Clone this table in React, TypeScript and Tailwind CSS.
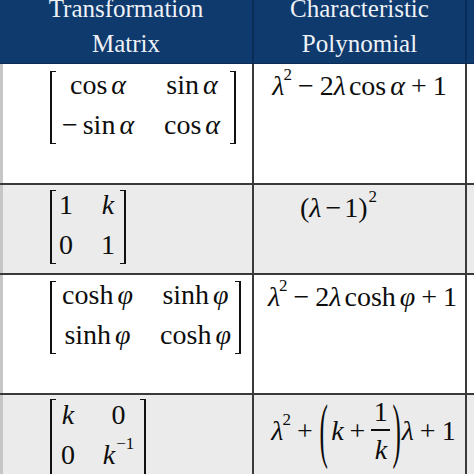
import React from "react";

const serif = "font-['Liberation_Serif','Times_New_Roman',serif]";

function LeftBracket({ className = "" }: { className?: string }) {
  return <div className={`w-[6px] border-y-[1.5px] border-l-2 border-[#111] ${className}`} />;
}

function RightBracket({ className = "" }: { className?: string }) {
  return <div className={`w-[6px] border-y-[1.5px] border-r-2 border-[#111] ${className}`} />;
}

const V = ({ children, className = "" }: { children: React.ReactNode; className?: string }) => (
  <span className={`italic ${className}`}>{children}</span>
);

const Sq = ({ className = "" }: { className?: string }) => (
  <sup className={`text-[17px] -top-[15px] -ml-[1px] not-italic ${className}`}>2</sup>
);

const Op = ({ children }: { children: React.ReactNode }) => <span className="mx-[6px]">{children}</span>;

function Row({
  bg,
  height,
  left,
  right,
}: {
  bg: string;
  height: string;
  left: React.ReactNode;
  right: React.ReactNode;
}) {
  return (
    <div className={`flex ${height} ${bg} border-b-2 border-[#3a3a3a]`}>
      <div className="w-[254px] border-l-[3px] border-l-[#c6c6c6] border-r-2 border-r-[#3a3a3a] pl-[47px]">
        {left}
      </div>
      <div className="w-[213px] border-r-2 border-[#3a3a3a]">{right}</div>
      <div className="flex-1" />
    </div>
  );
}

export default function App() {
  return (
    <div className={`w-[474px] h-[474px] overflow-hidden bg-white ${serif} text-[#0d0d0d]`}>
      <div className="flex h-[64px] bg-[#0e3a6d] text-[25px] leading-[35px] text-[#eef2f7] border-b border-[#0a2c55]">
        <div className="w-[254px] border-r-2 border-[#0a2d57] flex flex-col justify-end items-center pb-[2px] overflow-hidden">
          <div>Transformation</div>
          <div>Matrix</div>
        </div>
        <div className="w-[213px] border-r-2 border-[#0a2d57] flex flex-col justify-end items-center pb-[2px] overflow-hidden">
          <div>Characteristic</div>
          <div>Polynomial</div>
        </div>
        <div className="flex-1" />
      </div>

      <div className="text-[28px] leading-[40px]">
        <Row
          bg="bg-white"
          height="h-[121px]"
          left={
            <div className="flex pt-[1px]">
              <LeftBracket className="mt-[6px] mb-[1px]" />
              <div className="grid grid-cols-[84px_76px] gap-x-[14px] text-center whitespace-nowrap">
                <span>
                  cos<V className="ml-[4px]">α</V>
                </span>
                <span>
                  sin<V className="ml-[4px]">α</V>
                </span>
                <span>
                  −<span className="ml-[5px]">sin</span>
                  <V className="ml-[4px]">α</V>
                </span>
                <span>
                  cos<V className="ml-[4px]">α</V>
                </span>
              </div>
              <RightBracket className="mt-[6px] mb-[1px]" />
            </div>
          }
          right={
            <div className="pt-[2px] text-center whitespace-nowrap">
              <V>λ</V>
              <Sq />
              <Op>−</Op>2<V>λ</V>
              <span className="ml-[3px]">cos</span>
              <V className="ml-[4px]">α</V>
              <Op>+</Op>1
            </div>
          }
        />

        <Row
          bg="bg-[#ebebeb]"
          height="h-[90px]"
          left={
            <div className="flex">
              <LeftBracket className="mt-[5px] mb-[1px]" />
              <div className="grid grid-cols-[20px_24px] gap-x-[20px] text-center">
                <span>1</span>
                <V>k</V>
                <span>0</span>
                <span>1</span>
              </div>
              <RightBracket className="mt-[5px] mb-[1px]" />
            </div>
          }
          right={
            <div className="pt-[3px] pl-[46px] whitespace-nowrap">
              (<V className="mr-[1px]">λ</V>
              <span className="mx-[3px]">−</span>1)
              <Sq className="ml-[1px]" />
            </div>
          }
        />

        <Row
          bg="bg-white"
          height="h-[120px]"
          left={
            <div className="flex">
              <LeftBracket className="mt-[6px] mb-[1px]" />
              <div className="grid grid-cols-[83px_79px] gap-x-[17px] text-center whitespace-nowrap">
                <span>
                  cosh<V className="ml-[4px]">φ</V>
                </span>
                <span>
                  sinh<V className="ml-[4px]">φ</V>
                </span>
                <span>
                  sinh<V className="ml-[4px]">φ</V>
                </span>
                <span>
                  cosh<V className="ml-[4px]">φ</V>
                </span>
              </div>
              <RightBracket className="mt-[6px] mb-[1px]" />
            </div>
          }
          right={
            <div className="pt-[2px] pl-[6px] text-center whitespace-nowrap">
              <V>λ</V>
              <Sq />
              <Op>−</Op>2<V>λ</V>
              <span className="ml-[3px]">cosh</span>
              <V className="ml-[4px]">φ</V>
              <Op>+</Op>1
            </div>
          }
        />

        <Row
          bg="bg-[#ebebeb]"
          height="h-[90px]"
          left={
            <div className="flex">
              <LeftBracket className="mt-[4px]" />
              <div className="grid grid-cols-[24px_43px] gap-x-[17px] text-center whitespace-nowrap">
                <V>k</V>
                <span>0</span>
                <span>0</span>
                <span>
                  <V>k</V>
                  <sup className="text-[17px] -top-[15px] ml-[1px]">−1</sup>
                </span>
              </div>
              <RightBracket className="mt-[4px]" />
            </div>
          }
          right={
            <div className="flex h-[72px] items-center justify-center pl-[8px] whitespace-nowrap">
              <span>
                <V>λ</V>
                <Sq />
                <Op>+</Op>
              </span>
              <span className="inline-block scale-y-[2.6] scale-x-[0.9]">(</span>
              <span className="ml-[3px]">
                <V>k</V>
                <Op>+</Op>
              </span>
              <span className="flex flex-col items-center leading-[26px]">
                <span className="pb-[4px]">1</span>
                <span className="h-[1.5px] w-[19px] bg-[#0d0d0d]" />
                <span className="pt-[6px]">
                  <V>k</V>
                </span>
              </span>
              <span className="inline-block ml-[2px] scale-y-[2.6] scale-x-[0.9]">)</span>
              <span>
                <V>λ</V>
                <Op>+</Op>1
              </span>
            </div>
          }
        />
      </div>
    </div>
  );
}
